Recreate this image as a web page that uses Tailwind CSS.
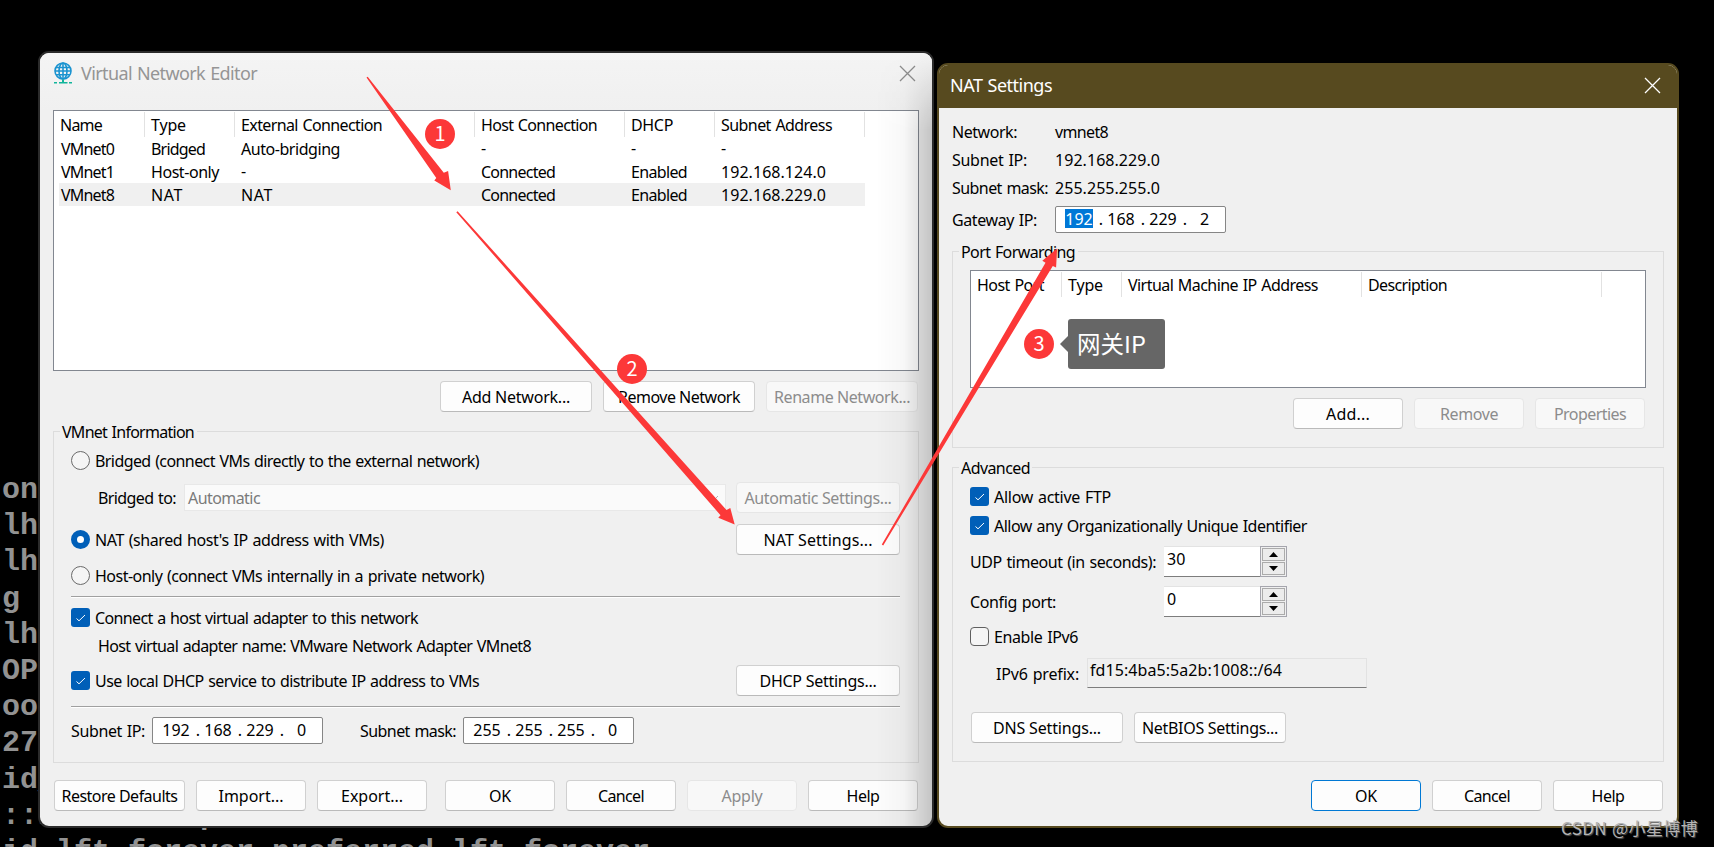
<!DOCTYPE html>
<html lang="en">
<head>
<meta charset="utf-8">
<title>Virtual Network Editor</title>
<script src="https://cdn.jsdelivr.net/npm/@tailwindcss/browser@4"></script>
</head>
<body class="relative h-[847px] w-[1714px] overflow-hidden bg-black font-['Noto_Sans','Noto_Sans_CJK_SC',sans-serif] text-[16px] leading-[19px] [word-spacing:1px] whitespace-nowrap text-black [&_[data-w]]:inline-block [&_[data-w]]:translate-y-px">

<!-- console behind the windows -->
<pre class="absolute top-[472px] left-[2px] font-['Liberation_Mono',monospace] text-[30px] leading-[36.2px] font-bold text-[#929292] [word-spacing:0]">onf
lho
lho
g t
lho
OPB
oop
27.
id_
::1/128 scope
id_lft forever preferred_lft forever</pre>

<!-- Virtual Network Editor -->
<section class="absolute top-[51px] left-[38px] flex h-[777px] w-[896px] flex-col overflow-hidden rounded-[11px] border-2 border-[#2b2b2b] bg-[#f0f0f0]">
  <header class="flex h-[57px] shrink-0 items-start bg-linear-to-b from-[#f4f4f4] to-[#f0f0f0] pl-[14px] pr-[16px]">
    <svg class="mt-[9px] h-[22px] w-[18px]" viewBox="0 0 18 22" fill="none" stroke="#1a93d0" stroke-width="1.6">
      <circle cx="9" cy="9" r="8"/><ellipse cx="9" cy="9" rx="4" ry="8"/><path d="M9 1v16M2 5.500h14M1 9h16M2 12.800h14"/>
      <path stroke="#12b59b" stroke-width="2" d="M9 17.500v3"/><path stroke="#12b59b" stroke-width="1.400" d="M0 20.800h3M5 20.800h8.500M15 20.800h3"/>
    </svg>
    <span data-w="176" class="ml-[9px] h-[41px] text-[18px] leading-[39px] text-[#959595]">Virtual Network Editor</span>
    <svg class="mt-[12px] ml-auto h-[17px] w-[17px]" viewBox="0 0 17 17" stroke="#8d8d8d" stroke-width="1.3"><path d="M1 1l15 15M16 1L1 16"/></svg>
  </header>

  <div class="mx-[13px] h-[261px] shrink-0 border border-[#828790] bg-white pt-px">
    <div class="grid h-[25px] grid-cols-[91px_90px_240px_150px_90px_150px] leading-[25px] *:border-r *:border-[#e2e2e2] *:pl-[6px]">
      <div><span data-w="42">Name</span></div><div><span data-w="35">Type</span></div><div><span data-w="141">External Connection</span></div><div><span data-w="116">Host Connection</span></div><div><span data-w="42">DHCP</span></div><div><span data-w="111">Subnet Address</span></div>
    </div>
    <div class="ml-[5px] grid h-[23px] w-[806px] grid-cols-[86px_90px_240px_150px_90px_150px] leading-[23px] *:pl-[6px] *:first:pl-[2px]">
      <div><span data-w="53">VMnet0</span></div><div><span data-w="54">Bridged</span></div><div><span data-w="99">Auto-bridging</span></div><div>-</div><div>-</div><div>-</div>
    </div>
    <div class="ml-[5px] grid h-[23px] w-[806px] grid-cols-[86px_90px_240px_150px_90px_150px] leading-[23px] *:pl-[6px] *:first:pl-[2px]">
      <div><span data-w="53">VMnet1</span></div><div><span data-w="68">Host-only</span></div><div>-</div><div><span data-w="74">Connected</span></div><div><span data-w="56">Enabled</span></div><div><span data-w="105">192.168.124.0</span></div>
    </div>
    <div class="ml-[5px] grid h-[23px] w-[806px] grid-cols-[86px_90px_240px_150px_90px_150px] bg-[#f0f0f0] leading-[23px] *:pl-[6px] *:first:pl-[2px]">
      <div><span data-w="53">VMnet8</span></div><div><span data-w="32">NAT</span></div><div><span data-w="32">NAT</span></div><div><span data-w="74">Connected</span></div><div><span data-w="56">Enabled</span></div><div><span data-w="105">192.168.229.0</span></div>
    </div>
  </div>

  <div class="mt-[10px] mr-[14px] flex shrink-0 justify-end gap-[11px] *:h-[31px] *:w-[152px] *:rounded-[4px] *:border *:leading-[29px]">
    <button class="border-[#d0d0d0] border-b-[#bababa] bg-[#fdfdfd]"><span data-w="108">Add Network...</span></button>
    <button class="border-[#d0d0d0] border-b-[#bababa] bg-[#fdfdfd]"><span data-w="122">Remove Network</span></button>
    <button class="border-[#e6e6e6] bg-[#f8f8f8] text-[#8c8c8c]"><span data-w="136">Rename Network...</span></button>
  </div>

  <fieldset class="mx-[13px] mt-[9px] h-[342px] shrink-0 border border-[#dcdcdc] pr-[18px] pl-[17px]">
    <legend class="-ml-[11px] h-[21px] w-[137px] pl-[2px] leading-[21px]"><span data-w="132">VMnet Information</span></legend>
    <div class="mt-[9px] flex h-[19px] items-center gap-[5px]">
      <i class="h-[19px] w-[19px] rounded-full border border-[#6a6a6a] bg-[#f5f5f5]"></i><span data-w="384">Bridged (connect VMs directly to the external network)</span>
    </div>
    <div class="mt-[12px] flex h-[31px] items-center pl-[27px]">
      <span class="w-[86px]"><span data-w="78">Bridged to:</span></span>
      <div class="flex h-[27px] w-[542px] items-center justify-between border border-[#e8e8e8] bg-[#fafafa] pr-[6px] pl-[3px] text-[#7a7a7a]"><span data-w="72">Automatic</span>
        <svg class="h-[6px] w-[10px]" viewBox="0 0 10 6" fill="none" stroke="#b0b0b0"><path d="M1 1l4 4 4-4"/></svg></div>
      <button class="ml-auto h-[31px] w-[164px] rounded-[4px] border border-[#e6e6e6] bg-[#f8f8f8] text-[#8c8c8c]"><span data-w="147">Automatic Settings...</span></button>
    </div>
    <div class="mt-[11px] flex h-[31px] items-center gap-[5px]">
      <i class="h-[19px] w-[19px] rounded-full border-[6px] border-[#005fb8] bg-white"></i><span data-w="289">NAT (shared host's IP address with VMs)</span>
      <button class="ml-auto h-[31px] w-[164px] rounded-[4px] border border-[#d0d0d0] border-b-[#bababa] bg-[#fdfdfd]"><span data-w="109">NAT Settings...</span></button>
    </div>
    <div class="mt-[11px] flex h-[19px] items-center gap-[5px]">
      <i class="h-[19px] w-[19px] rounded-full border border-[#6a6a6a] bg-[#f5f5f5]"></i><span data-w="389">Host-only (connect VMs internally in a private network)</span>
    </div>
    <div class="mt-[11px] h-[2px] border-t border-b border-t-[#a0a0a0] border-b-white"></div>
    <div class="mt-[10px] flex h-[19px] items-center gap-[5px]">
      <svg class="h-[19px] w-[19px] rounded-[3px] bg-[#005fb8]" viewBox="0 0 19 19" fill="none" stroke="#fff"><path d="M5.500 10.500l2.500 2.300 6-5.800"/></svg><span data-w="323">Connect a host virtual adapter to this network</span>
    </div>
    <div class="mt-[9px] h-[19px] pl-[27px]"><span data-w="433">Host virtual adapter name: VMware Network Adapter VMnet8</span></div>
    <div class="mt-[10px] flex h-[31px] items-center gap-[5px]">
      <svg class="h-[19px] w-[19px] rounded-[3px] bg-[#005fb8]" viewBox="0 0 19 19" fill="none" stroke="#fff"><path d="M5.500 10.500l2.500 2.300 6-5.800"/></svg><span data-w="384">Use local DHCP service to distribute IP address to VMs</span>
      <button class="ml-auto h-[31px] w-[164px] rounded-[4px] border border-[#d0d0d0] border-b-[#bababa] bg-[#fdfdfd]"><span data-w="117">DHCP Settings...</span></button>
    </div>
    <div class="mt-[10px] h-[2px] border-t border-b border-t-[#a0a0a0] border-b-white"></div>
    <div class="mt-[9px] flex h-[27px] items-center">
      <span class="w-[81px]"><span data-w="74">Subnet IP:</span></span>
      <div class="grid h-[27px] w-[171px] grid-cols-[28px_14px_28px_14px_28px_14px_20px] rounded-[2px] border border-[#868686] bg-white pl-[9px] text-center leading-[24px]"><b class="font-normal">192</b><b class="pl-[2px] font-normal">.</b><b class="font-normal">168</b><b class="pl-[2px] font-normal">.</b><b class="font-normal">229</b><b class="pl-[2px] font-normal">.</b><b class="pl-[7px] font-normal">0</b></div>
      <span class="ml-[37px] w-[103px]"><span data-w="96">Subnet mask:</span></span>
      <div class="grid h-[27px] w-[171px] grid-cols-[28px_14px_28px_14px_28px_14px_20px] rounded-[2px] border border-[#868686] bg-white pl-[9px] text-center leading-[24px]"><b class="font-normal">255</b><b class="pl-[2px] font-normal">.</b><b class="font-normal">255</b><b class="pl-[2px] font-normal">.</b><b class="font-normal">255</b><b class="pl-[2px] font-normal">.</b><b class="pl-[7px] font-normal">0</b></div>
    </div>
  </fieldset>

  <footer class="mt-[17px] flex shrink-0 gap-[11px] pl-[14px] *:h-[31px] *:w-[110px] *:rounded-[4px] *:border *:leading-[29px]">
    <button class="w-[131px]! border-[#d0d0d0] border-b-[#bababa] bg-[#fdfdfd]"><span data-w="116">Restore Defaults</span></button>
    <button class="border-[#d0d0d0] border-b-[#bababa] bg-[#fdfdfd]"><span data-w="65">Import...</span></button>
    <button class="border-[#d0d0d0] border-b-[#bababa] bg-[#fdfdfd]"><span data-w="62">Export...</span></button>
    <button class="ml-[7px] border-[#d0d0d0] border-b-[#bababa] bg-[#fdfdfd]"><span data-w="22">OK</span></button>
    <button class="border-[#d0d0d0] border-b-[#bababa] bg-[#fdfdfd]"><span data-w="46">Cancel</span></button>
    <button class="border-[#e6e6e6] bg-[#f8f8f8] text-[#8c8c8c]"><span data-w="41">Apply</span></button>
    <button class="border-[#d0d0d0] border-b-[#bababa] bg-[#fdfdfd]"><span data-w="33">Help</span></button>
  </footer>
  <!-- shadow cast by the dialog in front -->
  <div class="absolute top-0 right-0 h-full w-[56px] bg-linear-to-r from-black/0 via-black/3 to-black/18 mask-t-from-90% mask-t-to-100%"></div>
</section>

<!-- NAT Settings -->
<section class="absolute top-[63px] left-[937px] flex h-[765px] w-[742px] flex-col overflow-hidden rounded-[11px] border-2 border-[#574a1f] bg-[#f0f0f0]">
  <header class="flex h-[43px] shrink-0 items-start justify-between bg-[#574a1f] pr-[16px] pl-[11px] text-white">
    <span data-w="102" class="text-[18px] leading-[39px]">NAT Settings</span>
    <svg class="mt-[12px] h-[17px] w-[17px]" viewBox="0 0 17 17" stroke="#fff" stroke-width="1.3"><path d="M1 1l15 15M16 1L1 16"/></svg>
  </header>
  <div class="mt-[9px] grid h-[84px] shrink-0 grid-cols-[103px_1fr] grid-rows-[28px_28px_28px] pl-[13px] leading-[28px]">
    <div><span data-w="65">Network:</span></div><div><span data-w="53">vmnet8</span></div>
    <div><span data-w="75">Subnet IP:</span></div><div><span data-w="105">192.168.229.0</span></div>
    <div><span data-w="96">Subnet mask:</span></div><div><span data-w="105">255.255.255.0</span></div>
  </div>
  <div class="mt-[5px] flex h-[27px] shrink-0 items-center pl-[13px]">
    <span class="w-[103px]"><span data-w="85">Gateway IP:</span></span>
    <div class="grid h-[27px] w-[171px] grid-cols-[28px_14px_28px_14px_28px_14px_20px] rounded-[2px] border border-[#868686] bg-white pl-[9px] text-center leading-[24px]"><b class="mt-[2px] h-[19px] bg-[#0078d7] leading-[20px] font-normal text-white">192</b><b class="pl-[2px] font-normal">.</b><b class="font-normal">168</b><b class="pl-[2px] font-normal">.</b><b class="font-normal">229</b><b class="pl-[2px] font-normal">.</b><b class="pl-[7px] font-normal">2</b></div>
  </div>

  <fieldset class="mx-[13px] mt-[8px] h-[207px] shrink-0 border border-[#dcdcdc] pr-[17px] pl-[17px]">
    <legend class="-ml-[11px] h-[21px] w-[119px] pl-[2px] leading-[21px]"><span data-w="114">Port Forwarding</span></legend>
    <div class="mt-[8px] h-[118px] w-[676px] border border-[#828790] bg-white pt-px">
      <div class="grid h-[25px] grid-cols-[91px_60px_240px_240px] leading-[25px] *:border-r *:border-[#e2e2e2] *:pl-[6px]">
        <div><span data-w="67">Host Port</span></div><div><span data-w="35">Type</span></div><div><span data-w="190">Virtual Machine IP Address</span></div><div><span data-w="79">Description</span></div>
      </div>
    </div>
    <div class="mt-[10px] mr-px flex justify-end gap-[11px] *:h-[31px] *:w-[110px] *:rounded-[4px] *:border *:leading-[29px]">
      <button class="border-[#d0d0d0] border-b-[#bababa] bg-[#fdfdfd]"><span data-w="44">Add...</span></button>
      <button class="border-[#e6e6e6] bg-[#f8f8f8] text-[#8c8c8c]"><span data-w="58">Remove</span></button>
      <button class="border-[#e6e6e6] bg-[#f8f8f8] text-[#8c8c8c]"><span data-w="72">Properties</span></button>
    </div>
  </fieldset>

  <fieldset class="mx-[13px] mt-[9px] h-[305px] shrink-0 border border-[#dcdcdc] pr-[17px] pl-[17px]">
    <legend class="-ml-[11px] h-[21px] w-[73px] pl-[2px] leading-[21px]"><span data-w="69">Advanced</span></legend>
    <div class="mt-[9px] flex h-[19px] items-center gap-[5px]">
      <svg class="h-[19px] w-[19px] rounded-[3px] bg-[#005fb8]" viewBox="0 0 19 19" fill="none" stroke="#fff"><path d="M5.500 10.500l2.500 2.300 6-5.800"/></svg><span data-w="117">Allow active FTP</span>
    </div>
    <div class="mt-[10px] flex h-[19px] items-center gap-[5px]">
      <svg class="h-[19px] w-[19px] rounded-[3px] bg-[#005fb8]" viewBox="0 0 19 19" fill="none" stroke="#fff"><path d="M5.500 10.500l2.500 2.300 6-5.800"/></svg><span data-w="313">Allow any Organizationally Unique Identifier</span>
    </div>
    <div class="mt-[11px] flex h-[31px] items-center">
      <span class="w-[194px]"><span data-w="186">UDP timeout (in seconds):</span></span>
      <span class="h-[31px] w-[96px] border-t border-b border-t-[#e3e3e3] border-b-[#7d7d7d] bg-white pl-[3px] leading-[24px]">30</span>
      <div class="flex h-[31px] w-[27px] flex-col gap-px border border-[#a5a5ad] p-px *:flex *:h-[13px] *:flex-1 *:items-center *:justify-center *:border *:border-[#ababab] *:bg-[#ececec]">
        <i><svg class="h-[5px] w-[9px]" viewBox="0 0 9 5"><path d="M4.500 0L9 5H0z"/></svg></i><i><svg class="h-[5px] w-[9px]" viewBox="0 0 9 5"><path d="M4.500 5L9 0H0z"/></svg></i>
      </div>
    </div>
    <div class="mt-[9px] flex h-[31px] items-center">
      <span class="w-[194px]"><span data-w="86">Config port:</span></span>
      <span class="h-[31px] w-[96px] border-t border-b border-t-[#e3e3e3] border-b-[#7d7d7d] bg-white pl-[3px] leading-[24px]">0</span>
      <div class="flex h-[31px] w-[27px] flex-col gap-px border border-[#a5a5ad] p-px *:flex *:h-[13px] *:flex-1 *:items-center *:justify-center *:border *:border-[#ababab] *:bg-[#ececec]">
        <i><svg class="h-[5px] w-[9px]" viewBox="0 0 9 5"><path d="M4.500 0L9 5H0z"/></svg></i><i><svg class="h-[5px] w-[9px]" viewBox="0 0 9 5"><path d="M4.500 5L9 0H0z"/></svg></i>
      </div>
    </div>
    <div class="mt-[10px] flex h-[19px] items-center gap-[5px]">
      <i class="h-[19px] w-[19px] rounded-[4px] border border-[#606060] bg-[#f5f5f5]"></i><span data-w="84">Enable IPv6</span>
    </div>
    <div class="mt-[12px] flex h-[30px] items-center pl-[26px]">
      <span class="w-[91px]"><span data-w="83">IPv6 prefix:</span></span>
      <span class="h-[30px] w-[280px] border border-[#e2e2e2] border-b-[#7d7d7d] pl-[2px] leading-[21px]"><span data-w="192">fd15:4ba5:5a2b:1008::/64</span></span>
    </div>
    <div class="mt-[24px] ml-px flex gap-[11px] *:h-[31px] *:w-[152px] *:rounded-[4px] *:border *:border-[#d0d0d0] *:border-b-[#bababa] *:bg-[#fdfdfd] *:leading-[29px]">
      <button><span data-w="108">DNS Settings...</span></button><button><span data-w="136">NetBIOS Settings...</span></button>
    </div>
  </fieldset>
  <footer class="mt-[18px] mr-[14px] flex shrink-0 justify-end gap-[11px] *:h-[31px] *:w-[110px] *:rounded-[4px] *:border *:bg-[#fdfdfd] *:leading-[29px]">
    <button class="border-[#0078d4]"><span data-w="22">OK</span></button>
    <button class="border-[#d0d0d0] border-b-[#bababa]"><span data-w="46">Cancel</span></button>
    <button class="border-[#d0d0d0] border-b-[#bababa]"><span data-w="33">Help</span></button>
  </footer>
</section>

<!-- annotation arrows, numbered marks and label -->
<svg class="absolute inset-0" width="1714" height="847" viewBox="0 0 1714 847" fill="#fc3838">
  <path d="M366.500 77.600L436.300 178l-2 2.500 16.500 9.700-2.700-19.300-4.300 1.800L367.700 76.700z"/>
  <path d="M456.300 212.200L720.500 515.200l-2.200 2.500 16.400 6.700-4.400-16.400-3.800 2L457.600 211.200z"/>
  <path d="M881.800 544.600L1045.500 262.700l-3.200-2 14.800-12.300-1 19-3.300-1.400L883.200 545.400z"/>
</svg>
<div class="absolute top-[119px] left-[425px] h-[30px] w-[30px] rounded-full bg-[#fc3838] text-center font-['Noto_Sans_CJK_SC',sans-serif] text-[20px] leading-[27px] text-white">1</div>
<div class="absolute top-[354px] left-[617px] h-[30px] w-[30px] rounded-full bg-[#fc3838] text-center font-['Noto_Sans_CJK_SC',sans-serif] text-[20px] leading-[27px] text-white">2</div>
<div class="absolute top-[329px] left-[1024px] h-[30px] w-[30px] rounded-full bg-[#fc3838] text-center font-['Noto_Sans_CJK_SC',sans-serif] text-[20px] leading-[27px] text-white">3</div>
<svg class="absolute top-[336px] left-[1060px] h-[16px] w-[8px]" viewBox="0 0 8 16"><path d="M8 0v16L0 8z" fill="#666"/></svg>
<div class="absolute top-[319px] left-[1068px] h-[50px] w-[97px] rounded-[3px] bg-[#666] pl-[9px] font-['Noto_Sans_CJK_SC',sans-serif] text-[23.500px] leading-[49px] text-white">网关IP</div>

<div class="absolute top-[815px] left-[1561px] font-['Noto_Sans_CJK_SC',sans-serif] text-[17px] leading-[24px] text-[#b4b4b4] [text-shadow:1px_1px_1px_#555]"><span data-w="137">CSDN @小星博博</span></div>

<script>
  // Spread each label over its designed width (data-w, in px).
  function fitLabels() {
    document.querySelectorAll('[data-w]').forEach(el => {
      el.style.letterSpacing = '0px';
      const range = document.createRange();
      range.selectNodeContents(el);
      const spacing = (el.dataset.w - range.getBoundingClientRect().width) / el.textContent.length;
      el.style.letterSpacing = spacing.toFixed(3) + 'px';
    });
  }
  fitLabels();
  addEventListener('load', () => { fitLabels(); document.fonts.ready.then(fitLabels); });
</script>
</body>
</html>
